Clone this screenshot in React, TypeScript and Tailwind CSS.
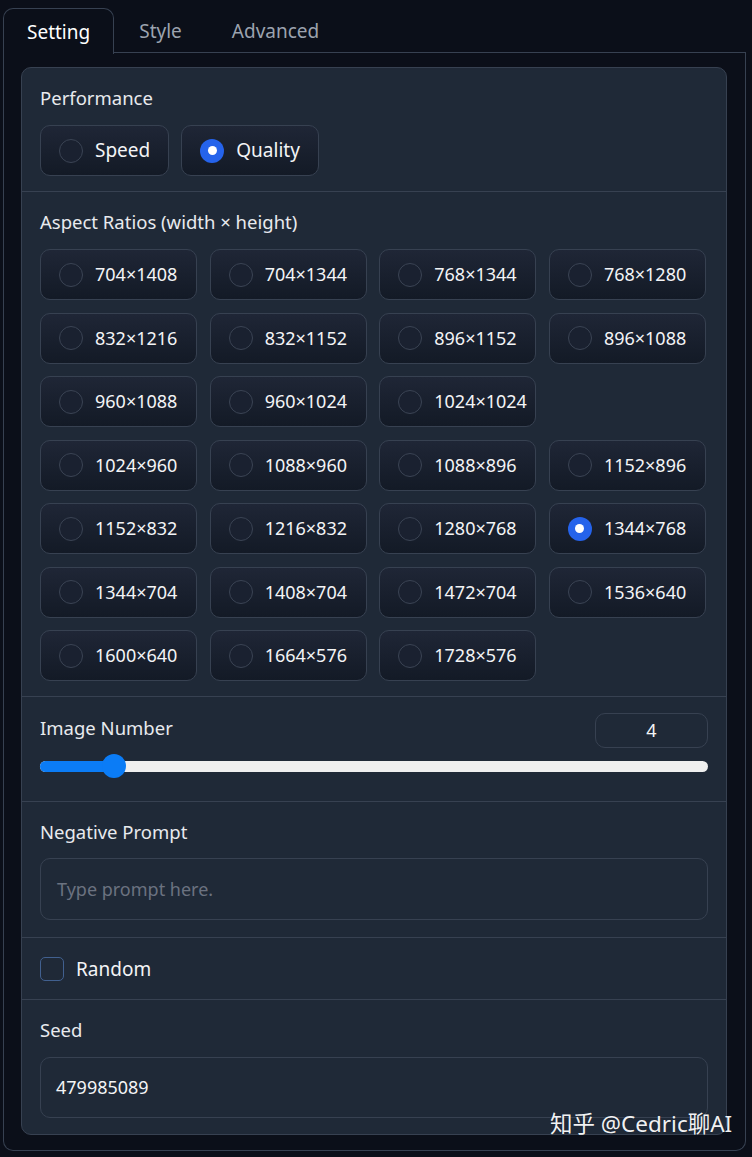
import React from 'react'

const font = { fontFamily: '"Noto Sans", "Noto Sans CJK SC", sans-serif' }

const ratioRows: string[][] = [
  ['704×1408', '704×1344', '768×1344', '768×1280'],
  ['832×1216', '832×1152', '896×1152', '896×1088'],
  ['960×1088', '960×1024', '1024×1024'],
  ['1024×960', '1088×960', '1088×896', '1152×896'],
  ['1152×832', '1216×832', '1280×768', '1344×768'],
  ['1344×704', '1408×704', '1472×704', '1536×640'],
  ['1600×640', '1664×576', '1728×576'],
]

function Radio({ checked }: { checked?: boolean }) {
  if (checked) {
    return (
      <span className="w-[24px] h-[24px] rounded-full bg-[#2563eb] flex items-center justify-center shrink-0">
        <span className="w-[9px] h-[9px] rounded-full bg-white" />
      </span>
    )
  }
  return <span className="w-[24px] h-[24px] rounded-full border border-[#3b4454] bg-[#1a2130] shrink-0" />
}

function Option({ label, checked, className = '' }: { label: string; checked?: boolean; className?: string }) {
  return (
    <div
      className={`h-[51px] flex items-center gap-[12px] px-[18px] rounded-[10px] border border-[#374151] bg-linear-to-t from-[#131a26] to-[#1f2636] text-[#f3f4f6] ${className}`}
    >
      <Radio checked={checked} />
      <span>{label}</span>
    </div>
  )
}

function Label({ children, className = '' }: { children: React.ReactNode; className?: string }) {
  return <div className={`h-[24px] leading-[24px] text-[18.5px] text-[#e8eaee] ${className}`}>{children}</div>
}

export default function App() {
  return (
    <div style={font} className="min-h-[1157px] bg-[#0b0f19] pt-[8px] pl-[3px] relative">
      <div className="w-[743px]">
        {/* Tabs */}
        <div className="flex h-[45px] text-[19px]">
          <div className="px-[23px] pt-[2px] flex items-center border border-b-0 border-[#374151] rounded-t-[10px] bg-[#0b0f19] text-white relative z-10 -mb-px">
            Setting
          </div>
          <div className="flex-1 flex border-b border-[#374151] pt-[2px]">
            <div className="px-[25px] flex items-center text-[#9ca3af]">Style</div>
            <div className="px-[25px] flex items-center text-[#9ca3af]">Advanced</div>
          </div>
        </div>

        {/* Panel */}
        <div className="border border-t-0 border-[#374151] rounded-b-[10px] pt-[14px] pl-[17px] pr-[18px] pb-[15px]">
          <div className="rounded-[10px] border border-[#374151] bg-[#1f2937] overflow-hidden">
            {/* Performance */}
            <div className="px-[18px] pt-[18px] pb-[15px]">
              <Label>Performance</Label>
              <div className="flex gap-[12px] mt-[15px] text-[19px]">
                <Option label="Speed" />
                <Option label="Quality" checked />
              </div>
            </div>

            {/* Aspect ratios */}
            <div className="px-[18px] pt-[18px] pb-[15px] border-t border-[#374151]">
              <Label>Aspect Ratios (width × height)</Label>
              <div className="grid grid-cols-4 gap-x-[12.5px] gap-y-[12.5px] mt-[15px] text-[18px] pr-[2px]">
                {ratioRows.map((row) => (
                  <React.Fragment key={row[0]}>
                    {row.map((r) => (
                      <Option key={r} label={r} checked={r === '1344×768'} />
                    ))}
                    {row.length < 4 && <div />}
                  </React.Fragment>
                ))}
              </div>
            </div>

            {/* Image number */}
            <div className="px-[18px] pt-[16px] pb-[23px] border-t border-[#374151]">
              <div className="flex items-center justify-between h-[35px]">
                <Label className="mb-[5px]">Image Number</Label>
                <div className="w-[113px] h-[35px] rounded-[10px] border border-[#374151] flex items-center justify-center text-[18px] text-[#f3f4f6]">
                  4
                </div>
              </div>
              <div className="relative h-[24px] mt-[6px] flex items-center">
                <div className="w-full h-[11px] rounded-full bg-[#efefef] overflow-hidden">
                  <div className="h-full bg-[#0b7cf6]" style={{ width: '74px' }} />
                </div>
                <div className="absolute left-[62px] top-0 w-[24px] h-[24px] rounded-full bg-[#0b7cf6]" />
              </div>
            </div>

            {/* Negative prompt */}
            <div className="px-[18px] pt-[18px] pb-[17px] border-t border-[#374151]">
              <Label>Negative Prompt</Label>
              <div className="mt-[14px] h-[62px] rounded-[10px] border border-[#374151] px-[16px] flex items-center text-[18px] text-[#6b7280]">
                Type prompt here.
              </div>
            </div>

            {/* Random */}
            <div className="px-[18px] pt-[19px] pb-[18px] border-t border-[#374151] flex items-center gap-[12px]">
              <span className="w-[24px] h-[24px] rounded-[5px] border border-[#41608f] bg-[#1f2937]" />
              <span className="text-[19px] text-[#f3f4f6] leading-[24px]">Random</span>
            </div>

            {/* Seed */}
            <div className="px-[18px] pt-[18px] pb-[16px] border-t border-[#374151]">
              <Label>Seed</Label>
              <div className="mt-[15px] h-[61px] rounded-[10px] border border-[#374151] px-[15px] flex items-center text-[18px] text-[#f3f4f6]">
                479985089
              </div>
            </div>
          </div>
        </div>
      </div>

      {/* Watermark */}
      <div className="absolute left-[550px] top-[1109px] text-[22.5px] leading-[30px] text-white/95 whitespace-nowrap">
        知乎 @Cedric聊AI
      </div>
    </div>
  )
}
